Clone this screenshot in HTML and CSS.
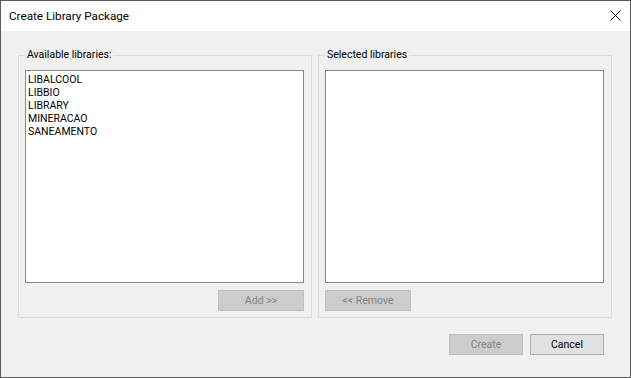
FILE: index.html
```html
<!DOCTYPE html>
<html lang="en">

<head>
  <meta charset="UTF-8" />
  <title>Create Library Package</title>
  <link rel="stylesheet" href="styles.css">
</head>

<body>
  <div class="window">
    <div class="titlebar">
      <span class="title">Create Library Package</span>
      <span class="close">
        <svg width="11" height="11" viewBox="0 0 11 11">
          <path d="M0.5 0.5 L10.5 10.5 M10.5 0.5 L0.5 10.5" stroke="#000" stroke-width="1" fill="none" />
        </svg>
      </span>
    </div>

    <div class="content">
      <div class="groups">
        <fieldset class="group">
          <legend>Available libraries:</legend>
          <ul class="listbox">
            <li>LIBALCOOL</li>
            <li>LIBBIO</li>
            <li>LIBRARY</li>
            <li>MINERACAO</li>
            <li>SANEAMENTO</li>
          </ul>
          <div class="row right">
            <button class="btn" disabled>Add &gt;&gt;</button>
          </div>
        </fieldset>

        <fieldset class="group">
          <legend>Selected libraries</legend>
          <ul class="listbox"></ul>
          <div class="row">
            <button class="btn" disabled>&lt;&lt; Remove</button>
          </div>
        </fieldset>
      </div>

      <div class="actions">
        <button class="btn wide" disabled>Create</button>
        <button class="btn wide">Cancel</button>
      </div>
    </div>
  </div>
</body>

</html>
```

FILE: styles.css
```css
* {
  box-sizing: border-box;
  margin: 0;
  padding: 0;
}

body {
  font-family: Roboto, "Liberation Sans", Arial, sans-serif;
  font-size: 10.5px;
  color: #000;
  background: #f0f0f0;
}

.window {
  width: 631px;
  height: 378px;
  border: 1px solid #5a5a5a;
  background: #f0f0f0;
  display: flex;
  flex-direction: column;
}

.titlebar {
  height: 30px;
  background: #fff;
  display: flex;
  align-items: center;
  justify-content: space-between;
  padding: 0 9px 0 8px;
}

.title {
  font-size: 11.7px;
}

.close {
  display: flex;
  margin-top: -1px;
}

.content {
  flex: 1;
  padding: 17px 18px 0 17px;
}

.groups {
  display: flex;
  gap: 6px;
}

.group {
  width: 294px;
  border: 1px solid #dcdcdc;
  padding: 8px 7px 6px 6px;
}

.group legend {
  padding: 0 2px;
  line-height: 14px;
}

.listbox {
  list-style: none;
  height: 213px;
  background: #fff;
  border: 1px solid #828790;
  padding: 2px 2px;
}

.listbox li {
  height: 13px;
  line-height: 13px;
}

.row {
  display: flex;
  margin-top: 7px;
}

.row.right {
  justify-content: flex-end;
}

.btn {
  font-family: inherit;
  font-size: 10.5px;
  width: 86px;
  height: 21px;
  background: #e1e1e1;
  border: 1px solid #adadad;
  color: #000;
}

.btn:disabled {
  background: #cccccc;
  border-color: #bfbfbf;
  color: #838383;
}

.actions {
  display: flex;
  justify-content: flex-end;
  gap: 7px;
  margin-top: 16px;
  padding-right: 8px;
}

.btn.wide {
  width: 74px;
}
```
